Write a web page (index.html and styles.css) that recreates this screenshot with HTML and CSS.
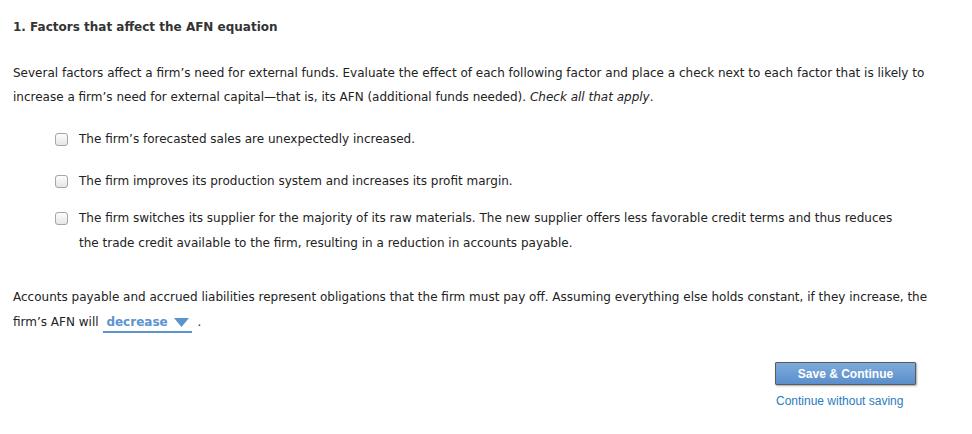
FILE: index.html
```html
<!DOCTYPE html>
<html>
<head>
<meta charset="utf-8">
<link rel="stylesheet" href="styles.css">
</head>
<body>
<div class="page">
  <h1 class="title">1. Factors that affect the AFN equation</h1>
  <p class="para">Several factors affect a firm’s need for external funds. Evaluate the effect of each following factor and place a check next to each factor that is likely to increase a firm’s need for external capital—that is, its AFN (additional funds needed). <em>Check all that apply</em>.</p>
  <ul class="options">
    <li class="option"><span class="box"></span><span class="opt-text">The firm’s forecasted sales are unexpectedly increased.</span></li>
    <li class="option"><span class="box"></span><span class="opt-text">The firm improves its production system and increases its profit margin.</span></li>
    <li class="option"><span class="box"></span><span class="opt-text">The firm switches its supplier for the majority of its raw materials. The new supplier offers less favorable credit terms and thus reduces the trade credit available to the firm, resulting in a reduction in accounts payable.</span></li>
  </ul>
  <p class="para para2">Accounts payable and accrued liabilities represent obligations that the firm must pay off. Assuming everything else holds constant, if they increase, the firm’s AFN will <span class="select">decrease<svg class="caret" width="15" height="9" viewBox="0 0 15 9"><path d="M0 0H15L7.5 9Z" fill="#5b93cf"/></svg></span> <span class="dot">.</span></p>
  <div class="actions">
    <button class="btn">Save &amp; Continue</button>
    <a class="link" href="#">Continue without saving</a>
  </div>
</div>
</body>
</html>
```
FILE: styles.css
```css
html, body {
  margin: 0;
  padding: 0;
  background: #fff;
}
.page {
  padding: 17px 13px 0 13px;
  font-family: "DejaVu Sans", Verdana, sans-serif;
  font-size: 12px;
  color: #222;
  letter-spacing: 0;
}
.title {
  margin: 0;
  font-size: 12px;
  font-weight: bold;
  color: #333;
  line-height: 20px;
}
.para {
  margin: 24px 0 0 0;
  line-height: 24px;
  max-width: 935px;
}
.para em {
  font-style: italic;
}
.options {
  list-style: none;
  margin: 18px 0 0 0;
  padding: 0 0 0 42px;
}
.option {
  display: flex;
  align-items: flex-start;
  gap: 11px;
  line-height: 25px;
  margin-bottom: 16px;
}
.option:nth-child(1) {
  margin-bottom: 17px;
}
.option:nth-child(2) {
  margin-bottom: 12px;
}
.box {
  flex: none;
  width: 11px;
  height: 11px;
  margin-top: 6px;
  border: 1px solid #a5a5a5;
  border-radius: 3px;
  background: linear-gradient(#fdfdfd, #e6e6e6);
}
.opt-text {
  max-width: 830px;
}
.para2 {
  margin-top: 29px;
  line-height: 25px;
}
.select {
  display: inline-flex;
  align-items: center;
  gap: 6px;
  color: #5b93cf;
  font-weight: bold;
  padding: 0 3px 0 3px;
  border-bottom: 2px solid #5b93cf;
  line-height: 18px;
  margin-left: 1px;
}
.caret {
  display: block;
}
.dot {
  margin-left: 2px;
}
.actions {
  display: flex;
  flex-direction: column;
  align-items: flex-start;
  margin: 27px 0 0 762px;
  gap: 9px;
}
.btn {
  width: 141px;
  height: 23px;
  border: 1px solid #5a5a5a;
  border-radius: 1px;
  background: linear-gradient(#7eabdc, #5a8ecb);
  color: #fff;
  font-family: "Liberation Sans", Arial, sans-serif;
  font-weight: bold;
  font-size: 12px;
  box-shadow: 1px 1px 2px rgba(0,0,0,0.35);
  padding: 0;
  letter-spacing: 0;
}
.link {
  font-family: "Liberation Sans", Arial, sans-serif;
  font-size: 12px;
  color: #2b7cc0;
  text-decoration: none;
  letter-spacing: 0;
  margin-left: 1px;
}
```
